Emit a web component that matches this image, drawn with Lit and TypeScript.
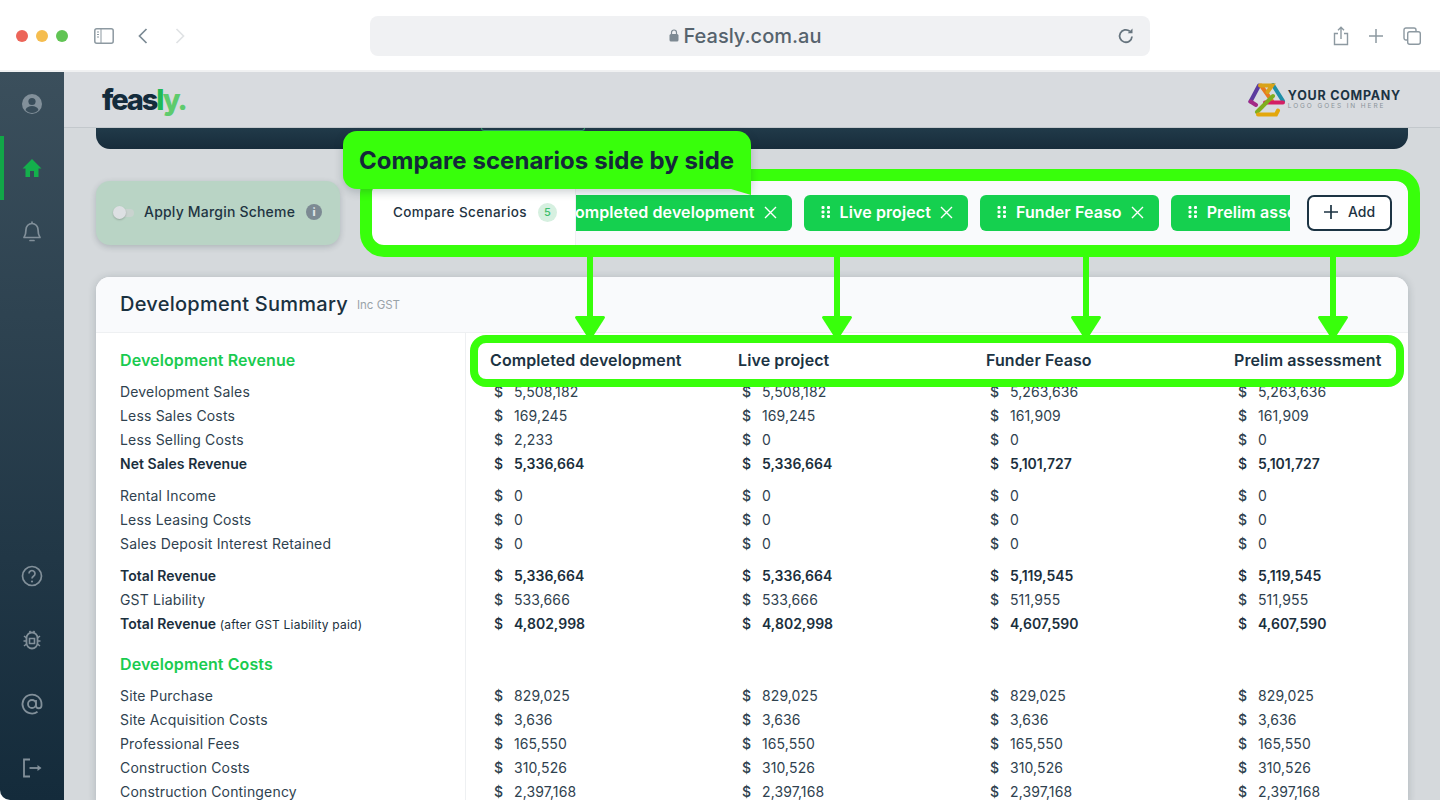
import { LitElement, html, css, svg } from "lit";
import { customElement } from "lit/decorators.js";

interface Row {
  label: string;
  note?: string;
  values?: string[];
  bold?: boolean;
  gap?: boolean;
  heading?: boolean;
}

const same = (v: string) => [v, v, v, v];

const ROWS: Row[] = [
  { label: "Development Revenue", heading: true },
  { label: "Development Sales", values: ["5,508,182", "5,508,182", "5,263,636", "5,263,636"] },
  { label: "Less Sales Costs", values: ["169,245", "169,245", "161,909", "161,909"] },
  { label: "Less Selling Costs", values: ["2,233", "0", "0", "0"] },
  { label: "Net Sales Revenue", bold: true, values: ["5,336,664", "5,336,664", "5,101,727", "5,101,727"] },
  { label: "Rental Income", gap: true, values: same("0") },
  { label: "Less Leasing Costs", values: same("0") },
  { label: "Sales Deposit Interest Retained", values: same("0") },
  { label: "Total Revenue", gap: true, bold: true, values: ["5,336,664", "5,336,664", "5,119,545", "5,119,545"] },
  { label: "GST Liability", values: ["533,666", "533,666", "511,955", "511,955"] },
  { label: "Total Revenue", note: "(after GST Liability paid)", bold: true, values: ["4,802,998", "4,802,998", "4,607,590", "4,607,590"] },
  { label: "Development Costs", heading: true },
  { label: "Site Purchase", values: same("829,025") },
  { label: "Site Acquisition Costs", values: same("3,636") },
  { label: "Professional Fees", values: same("165,550") },
  { label: "Construction Costs", values: same("310,526") },
  { label: "Construction Contingency", values: same("2,397,168") },
];

const SCENARIOS = ["Completed development", "Live project", "Funder Feaso", "Prelim assessment"];
const ARROWS = [590, 837, 1086, 1333];

const dots = html`<svg class="dots" width="10" height="14" viewBox="0 0 10 14" fill="#fff">
  <rect x="0.5" y="1" width="3" height="3" rx="1"></rect><rect x="6" y="1" width="3" height="3" rx="1"></rect>
  <rect x="0.5" y="5.5" width="3" height="3" rx="1"></rect><rect x="6" y="5.5" width="3" height="3" rx="1"></rect>
  <rect x="0.5" y="10" width="3" height="3" rx="1"></rect><rect x="6" y="10" width="3" height="3" rx="1"></rect>
</svg>`;

const closeX = html`<svg width="13" height="13" viewBox="0 0 13 13" stroke="#fff" stroke-width="1.4" fill="none">
  <path d="M1 1l11 11M12 1L1 12"></path>
</svg>`;

const navIcons = {
  user: svg`<circle cx="12" cy="12" r="10" fill="currentColor"/><circle cx="12" cy="9.5" r="3.6" fill="#3a4e5b"/><path d="M5.5 18c1-3 3.6-4 6.5-4s5.500 1 6.500 4c-1.700 1.900-4 3-6.500 3s-4.800-1.100-6.500-3z" fill="#3a4e5b"/>`,
  home: svg`<path d="M12 3L2.500 12.500H5.500V21H10V15H14V21H18.500V12.500H21.500z" fill="currentColor"/>`,
  bell: svg`<path d="M12 3.500a6 6 0 0 0-6 6c0 5-1 6.500-2 8h16c-1-1.500-2-3-2-8a6 6 0 0 0-6-6zM10 20.500h4M12 2v1.500" fill="none" stroke="currentColor" stroke-width="1.700" stroke-linejoin="round" stroke-linecap="round"/>`,
  help: svg`<circle cx="12" cy="12" r="9.500" fill="none" stroke="currentColor" stroke-width="1.700"/><path d="M9 9.500a3 3 0 1 1 4.700 2.500c-1.100.8-1.700 1.300-1.700 2.500" fill="none" stroke="currentColor" stroke-width="1.700"/><circle cx="12" cy="17.500" r="1.100" fill="currentColor"/>`,
  bug: svg`<rect x="6.500" y="4.500" width="11" height="16" rx="5.500" fill="none" stroke="currentColor" stroke-width="1.800"/><path d="M9.500 10.500h5v5h-5zM9.500 3l1.500 2M14.500 3L13 5M4 8l2.500 2M20 8l-2.500 2M3.500 13h3M20.500 13h-3M4 18l2.500-2M20 18l-2.500-2" fill="none" stroke="currentColor" stroke-width="1.600"/>`,
  at: svg`<circle cx="12" cy="12" r="4" fill="none" stroke="currentColor" stroke-width="1.800"/><path d="M16 8v5.500a2.700 2.700 0 0 0 5.500 0V12a9.500 9.500 0 1 0-4 7.800" fill="none" stroke="currentColor" stroke-width="1.800"/>`,
  logout: svg`<path d="M10 3.500H4v17h6" fill="none" stroke="currentColor" stroke-width="1.800"/><path d="M9.500 12H20" fill="none" stroke="currentColor" stroke-width="1.800"/><path d="M17.500 9l4 3-4 3z" fill="currentColor"/>`,
};

@customElement("app-root")
export class AppRoot extends LitElement {
  static styles = css`
    :host {
      display: block;
      position: relative;
      width: 1440px;
      height: 800px;
      overflow: hidden;
      background: #fff;
      font-family: Inter, "Liberation Sans", sans-serif;
      color: #2f424f;
    }

    .chrome {
      height: 72px;
      box-sizing: border-box;
      border-bottom: 2px solid #f0f1f2;
      display: flex;
      align-items: center;
      padding: 2px 16px 0;
      background: #fff;
    }
    .lights { display: flex; gap: 8px; }
    .lights i { width: 12px; height: 12px; border-radius: 50%; }
    .red { background: #ec6559; }
    .amber { background: #f5bd4f; }
    .lime { background: #61c454; }
    .tool { margin-left: 26px; display: block; }
    .back { margin-left: 24px; }
    .fwd { margin-left: 27px; }
    .url {
      position: relative;
      width: 780px;
      height: 40px;
      margin-left: 185px;
      box-sizing: border-box;
      padding: 0 30px 1px 0;
      border-radius: 8px;
      background: #f0f1f3;
      display: flex;
      align-items: center;
      justify-content: center;
      gap: 5px;
      font-size: 20px;
      font-weight: 500;
      color: #56636d;
    }
    .reload { position: absolute; right: 15px; top: 11px; }
    .actions { display: flex; align-items: center; gap: 20px; margin-left: auto; margin-right: 3px; }

    .window { display: flex; height: 728px; }
    .side {
      width: 64px;
      flex: none;
      display: flex;
      flex-direction: column;
      background: linear-gradient(#3b4f5c, #142b3b);
      border-bottom-left-radius: 10px;
    }
    .nav {
      height: 64px;
      display: flex;
      align-items: center;
      justify-content: center;
      color: #82909a;
      box-sizing: border-box;
    }
    .nav.on { color: #14b04c; border-left: 4px solid #12a648; padding-right: 4px; }
    .spacer { flex: 1; }

    .main { flex: 1; min-width: 0; background: #d5d9dc; overflow: hidden; }
    .top {
      height: 55px;
      border-bottom: 1px solid #c3c8cc;
      background: #d8dbdf;
      display: flex;
      align-items: center;
      justify-content: space-between;
      padding: 0 39px 0 38px;
    }
    .brand { font-size: 29px; font-weight: 800; letter-spacing: -2.100px; color: #142c3c; line-height: 1; margin-bottom: 1px; }
    .brand b { font-weight: 800; color: #20b955; }
    .brand em { font-style: normal; color: #5ecb6d; }
    .company { display: flex; align-items: center; gap: 2px; }
    .company div { display: flex; flex-direction: column; }
    .company strong { font-size: 12.500px; line-height: 13px; font-weight: 700; letter-spacing: 0.750px; color: #1c3343; }
    .company span { font-size: 6.500px; line-height: 9px; letter-spacing: 1.900px; color: #8b949a; }

    .content { padding: 0 32px; }
    .hero {
      position: relative;
      height: 21px;
      background: linear-gradient(#213a49, #172c3b);
      border-radius: 0 0 14px 14px;
    }
    .tab {
      position: absolute;
      left: 385px;
      top: 0;
      width: 104px;
      height: 3px;
      box-sizing: border-box;
      border: 1px solid #2f9c64;
      border-top: 0;
      border-radius: 0 0 5px 5px;
    }

    .tools { display: flex; gap: 32px; margin-top: 32px; height: 64px; }
    .margin {
      width: 244px;
      flex: none;
      box-sizing: border-box;
      padding: 0 17px 3px;
      border-radius: 14px;
      background: #b9d4c5;
      box-shadow: 0 2px 6px rgba(20, 40, 50, 0.2);
      display: flex;
      align-items: center;
      font-size: 14px;
      font-weight: 500;
      letter-spacing: 0.200px;
      color: #1f3442;
    }
    .toggle { position: relative; width: 21px; height: 8px; border-radius: 4px; background: #c9d3cf; margin: 2px 10px 0 0; }
    .toggle::after {
      content: "";
      position: absolute;
      left: 0;
      top: -2.500px;
      width: 13px;
      height: 13px;
      border-radius: 50%;
      background: #dde0e3;
      box-shadow: 0 1px 2px rgba(0, 0, 0, 0.2);
    }
    .info {
      width: 16px;
      height: 16px;
      margin-left: 11px;
      border-radius: 50%;
      background: #7c8a93;
      color: #dfe4e6;
      font-size: 11px;
      font-weight: 800;
      line-height: 16px;
      text-align: center;
    }

    .compare {
      flex: 1;
      min-width: 0;
      display: flex;
      align-items: center;
      background: #f9fafc;
      border-radius: 12px;
      padding-right: 16px;
    }
    .compare-label {
      width: 204px;
      height: 100%;
      flex: none;
      box-sizing: border-box;
      padding: 0 0 2px 21px;
      display: flex;
      align-items: center;
      gap: 11px;
      background: #fff;
      border-right: 1px solid #eef0f2;
      border-radius: 12px 0 0 12px;
      font-size: 13.500px;
      font-weight: 500;
      letter-spacing: 0.400px;
      color: #1f3442;
    }
    .count {
      width: 19px;
      height: 19px;
      border-radius: 50%;
      background: #d6f0e0;
      color: #3ebf6c;
      font-size: 11px;
      letter-spacing: 0;
      line-height: 19px;
      text-align: center;
    }
    .chips { width: 714px; flex: none; overflow: hidden; }
    .chips-track { display: flex; gap: 12px; margin-left: -49px; width: max-content; }
    .chip {
      height: 36px;
      box-sizing: border-box;
      display: flex;
      align-items: center;
      gap: 9px;
      padding: 0 15px 2px 17px;
      border-radius: 6px;
      background: #15d04f;
      color: #fff;
      font-size: 16px;
      font-weight: 600;
      letter-spacing: 0.100px;
      white-space: nowrap;
    }
    .add {
      width: 85px;
      height: 36px;
      margin-left: 17px;
      box-sizing: border-box;
      border: 2px solid #1c3343;
      border-radius: 7px;
      padding-bottom: 3px;
      display: flex;
      align-items: center;
      justify-content: center;
      gap: 10px;
      background: #fff;
      font-size: 14px;
      font-weight: 500;
      color: #1c3343;
    }

    .card {
      margin-top: 32px;
      border-radius: 14px 14px 0 0;
      background: #fff;
      box-shadow: 0 1px 8px rgba(20, 40, 50, 0.2);
    }
    .card-head {
      display: flex;
      align-items: center;
      gap: 9px;
      padding: 0 0 1px 24px;
      height: 54px;
      background: #f9fafc;
      border-bottom: 1px solid #eef0f2;
      border-radius: 14px 14px 0 0;
    }
    .card-head h2 { margin: 0; font-size: 20px; font-weight: 500; letter-spacing: 0.250px; color: #1a3140; }
    .card-head small { font-size: 11.500px; color: #9aa3a9; margin-top: 2px; }

    .row { display: grid; grid-template-columns: 370px repeat(3, 248px) 1fr; line-height: 24px; font-size: 14px; letter-spacing: 0.170px; }
    .row.bold { font-weight: 600; color: #1b2f3d; letter-spacing: 0.050px; }
    .name { padding-left: 24px; border-right: 1px solid #eef0f2; white-space: nowrap; }
    .note { font-size: 12px; font-weight: 400; letter-spacing: 0.200px; line-height: 1; }
    .row.gap > * { padding-top: 8px; }
    .row.heading > * { padding-top: 16px; padding-bottom: 8px; }
    .row.heading:first-of-type > * { padding-top: 15px; }
    .row.heading .name { font-size: 16px; font-weight: 600; letter-spacing: 0.100px; color: #1acb50; }
    .val { display: flex; padding-left: 28px; letter-spacing: 0.100px; }
    .row.bold .val { letter-spacing: 0; }
    .val i { width: 20px; font-style: normal; font-weight: 500; }

    .frame { position: absolute; box-sizing: border-box; border-style: solid; border-color: #38ff0b; }
    .frame-tools { left: 360px; top: 169px; width: 1060px; height: 88px; border-width: 12px; border-radius: 24px; }
    .frame-heads {
      left: 470px;
      top: 335px;
      width: 934px;
      height: 52px;
      border-width: 8px;
      border-radius: 16px;
      background: #fff;
      display: flex;
      align-items: center;
      padding: 0 0 2px 12px;
      font-size: 16px;
      font-weight: 600;
      letter-spacing: 0.100px;
      color: #1c3343;
    }
    .frame-heads span { width: 248px; flex: none; white-space: nowrap; }
    .frame-heads span:last-child { width: auto; }
    .arrow { position: absolute; top: 257px; display: block; }
    .callout {
      position: absolute;
      left: 343px;
      top: 131px;
      width: 408px;
      height: 58px;
      box-sizing: border-box;
      padding-left: 16px;
      display: flex;
      align-items: center;
      border-radius: 14px 14px 0 14px;
      background: #38ff0b;
      box-shadow: 0 3px 10px rgba(20, 40, 50, 0.22);
      font-size: 24px;
      font-weight: 700;
      letter-spacing: 0.070px;
      color: #14283a;
      white-space: nowrap;
    }
    .callout::after {
      content: "";
      position: absolute;
      right: 0;
      top: 58px;
      border-style: solid;
      border-width: 0 0 6px 20px;
      border-color: transparent;
      border-left-color: #38ff0b;
      transform: scaleX(-1);
    }
  `;

  private renderChrome() {
    return html`<div class="chrome">
      <div class="lights"><i class="red"></i><i class="amber"></i><i class="lime"></i></div>
      <svg class="tool" width="20" height="16" viewBox="0 0 20 16" fill="none" stroke="#8d99a1" stroke-width="1.500">
        <rect x="0.800" y="0.800" width="18.400" height="14.400" rx="2"></rect>
        <path d="M7 1v14M3 4h2M3 6.500h2M3 9h2" stroke-width="1"></path>
      </svg>
      <svg class="back" width="10" height="16" viewBox="0 0 10 16" fill="none" stroke="#7b8a94" stroke-width="1.700">
        <path d="M8.500 1L1.500 8l7 7"></path>
      </svg>
      <svg class="fwd" width="10" height="16" viewBox="0 0 10 16" fill="none" stroke="#e0e3e5" stroke-width="1.700">
        <path d="M1.500 1l7 7-7 7"></path>
      </svg>
      <div class="url">
        <svg width="10" height="13" viewBox="0 0 10 13">
          <rect x="0.500" y="5" width="9" height="7.500" rx="1.500" fill="#7d8992"></rect>
          <path d="M2.500 5.500V3.500a2.500 2.500 0 0 1 5 0v2" fill="none" stroke="#7d8992" stroke-width="1.200"></path>
        </svg>
        Feasly.com.au
        <svg class="reload" width="18" height="18" viewBox="0 0 18 18" fill="none" stroke="#66747e" stroke-width="1.800">
          <path d="M15 9.500A6.200 6.200 0 1 1 12.800 4.300"></path>
          <path d="M15.500 1.500v4.800h-4.800z" fill="#66747e" stroke="none"></path>
        </svg>
      </div>
      <div class="actions">
        <svg width="16" height="20" viewBox="0 0 16 20" fill="none" stroke="#8d99a1" stroke-width="1.400">
          <path d="M5 7.500H1.500v11h13v-11H11M8 13V1.500M5 4.300l3-3 3 3"></path>
        </svg>
        <svg width="14" height="14" viewBox="0 0 14 14" stroke="#8d99a1" stroke-width="1.500"><path d="M7 0v14M0 7h14"></path></svg>
        <svg width="18" height="18" viewBox="0 0 18 18" fill="none" stroke="#8d99a1" stroke-width="1.400">
          <rect x="4.700" y="4.700" width="12.600" height="12.600" rx="2"></rect>
          <path d="M4.500 13H3a2 2 0 0 1-2-2V3a2 2 0 0 1 2-2h8a2 2 0 0 1 2 2v1.500"></path>
        </svg>
      </div>
    </div>`;
  }

  private navItem(icon: unknown, on = false) {
    return html`<div class="nav ${on ? "on" : ""}">
      <svg width="24" height="24" viewBox="0 0 24 24">${icon}</svg>
    </div>`;
  }

  private renderSide() {
    return html`<nav class="side">
      ${this.navItem(navIcons.user)} ${this.navItem(navIcons.home, true)} ${this.navItem(navIcons.bell)}
      <div class="spacer"></div>
      ${this.navItem(navIcons.help)} ${this.navItem(navIcons.bug)} ${this.navItem(navIcons.at)} ${this.navItem(navIcons.logout)}
    </nav>`;
  }

  private renderTop() {
    return html`<header class="top">
      <div class="brand">feas<b>l</b><em>y.</em></div>
      <div class="company">
        <svg width="38" height="34" viewBox="0 0 38 34" fill="none" stroke-width="4" stroke-linecap="round">
          <path d="M11 2.500L2.500 18.500" stroke="#5b3b9e"></path>
          <path d="M2.500 18.500L8 22" stroke="#a32a86"></path>
          <path d="M25 2L35 18" stroke="#1f8fa8"></path>
          <path d="M13 2.500L24 18" stroke="#e8791f"></path>
          <path d="M12 2.500h12L19.500 9" stroke="#d8a31a"></path>
          <path d="M17 19.500h18" stroke="#d41e64"></path>
          <path d="M25 13L9 29" stroke="#7fae1f"></path>
          <path d="M10 31.500h18l2-4" stroke="#e3a70c"></path>
        </svg>
        <div><strong>YOUR COMPANY</strong><span>LOGO GOES IN HERE</span></div>
      </div>
    </header>`;
  }

  private renderTools() {
    return html`<section class="tools">
      <div class="margin"><span class="toggle"></span>Apply Margin Scheme<span class="info">i</span></div>
      <div class="compare">
        <div class="compare-label">Compare Scenarios<span class="count">5</span></div>
        <div class="chips">
          <div class="chips-track">
            ${SCENARIOS.map((s) => html`<div class="chip">${dots}<span>${s}</span>${closeX}</div>`)}
          </div>
        </div>
        <div class="add">
          <svg width="14" height="14" viewBox="0 0 14 14" stroke="#1c3343" stroke-width="1.700"><path d="M7 0v14M0 7h14"></path></svg>
          Add
        </div>
      </div>
    </section>`;
  }

  private renderRow(row: Row) {
    const cls = [row.bold ? "bold" : "", row.gap ? "gap" : "", row.heading ? "heading" : ""].join(" ");
    return html`<div class="row ${cls}">
      <div class="name">${row.label}${row.note ? html` <span class="note">${row.note}</span>` : ""}</div>
      ${row.values?.map((v) => html`<div class="val"><i>$</i><span>${v}</span></div>`)}
    </div>`;
  }

  render() {
    return html`
      ${this.renderChrome()}
      <div class="window">
        ${this.renderSide()}
        <main class="main">
          ${this.renderTop()}
          <div class="content">
            <div class="hero"><div class="tab"></div></div>
            ${this.renderTools()}
            <section class="card">
              <div class="card-head"><h2>Development Summary</h2><small>Inc GST</small></div>
              <div class="rows">${ROWS.map((r) => this.renderRow(r))}</div>
            </section>
          </div>
        </main>
      </div>

      <div class="frame frame-tools"></div>
      ${ARROWS.map(
        (x) => html`<svg class="arrow" style="left:${x - 16}px" width="32" height="81" viewBox="0 0 32 81" fill="#38ff0b">
          <rect x="13" y="0" width="6" height="62"></rect>
          <path d="M2.500 59h27a1.500 1.500 0 0 1 1.200 2.300L18 81h-4L1.300 61.300A1.500 1.500 0 0 1 2.500 59z"></path>
        </svg>`,
      )}
      <div class="frame frame-heads">${SCENARIOS.map((s) => html`<span>${s}</span>`)}</div>
      <div class="callout">Compare scenarios side by side</div>
    `;
  }
}
